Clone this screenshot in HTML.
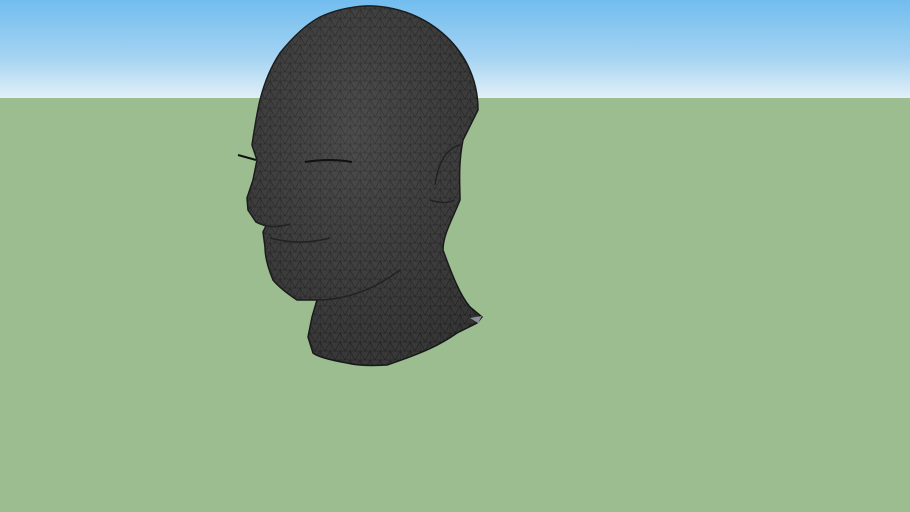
<!DOCTYPE html>
<html><head><meta charset="utf-8"><style>
html,body{margin:0;padding:0;width:910px;height:512px;overflow:hidden;background:#9bbd8f}
</style></head><body>
<svg width="910" height="512" viewBox="0 0 910 512" xmlns="http://www.w3.org/2000/svg">
<defs>
<linearGradient id="sky" x1="0" y1="0" x2="0" y2="1">
<stop offset="0" stop-color="#72bdef"/>
<stop offset="0.6" stop-color="#a6d4f2"/>
<stop offset="1" stop-color="#e2f0f8"/>
</linearGradient>
<pattern id="mesh" width="10" height="9" patternUnits="userSpaceOnUse">
<rect width="10" height="9" fill="#444444"/>
<path d="M0 0L10 0M0 9L10 9M0 0L5 9L10 0M0 9L0 0" stroke="#252525" stroke-width="0.6" fill="none"/>
</pattern>
<radialGradient id="shade" cx="0.45" cy="0.35" r="0.7">
<stop offset="0" stop-color="#666" stop-opacity="0.25"/>
<stop offset="1" stop-color="#000" stop-opacity="0.2"/>
</radialGradient>
</defs>
<rect x="0" y="0" width="910" height="98" fill="url(#sky)"/>
<rect x="0" y="98" width="910" height="414" fill="#9bbd8f"/>
<path d="M365 6 C420 4 478 45 478 110 L463 140 C458 165 460 185 460 200 C452 220 443 235 443 250 C452 275 460 295 470 307 L482 317 L477 323 L457 333 C440 345 423 353 387 365 C370 366 355 365 347 363 C330 360 318 357 313 353 L308 337 L312 317 L317 300 L297 300 C285 292 278 286 273 280 C268 268 265 258 265 247 L263 232 L266 226 L256 222 L248 210 L247 198 L253 180 L257 160 L252 145 C255 125 257 112 260 100 C265 80 272 65 280 53 C292 38 305 25 320 17 C335 10 350 7 365 6Z" fill="url(#mesh)" stroke="#1a1a1a" stroke-width="1.5"/>
<path d="M365 6 C420 4 478 45 478 110 L463 140 C458 165 460 185 460 200 C452 220 443 235 443 250 C452 275 460 295 470 307 L482 317 L477 323 L457 333 C440 345 423 353 387 365 C370 366 355 365 347 363 C330 360 318 357 313 353 L308 337 L312 317 L317 300 L297 300 C285 292 278 286 273 280 C268 268 265 258 265 247 L263 232 L266 226 L256 222 L248 210 L247 198 L253 180 L257 160 L252 145 C255 125 257 112 260 100 C265 80 272 65 280 53 C292 38 305 25 320 17 C335 10 350 7 365 6Z" fill="url(#shade)"/>
<path d="M238 155 L256 160 M305 162 Q330 158 352 162" stroke="#111" stroke-width="2" fill="none"/>
<path d="M256 222 Q270 230 290 224 M270 238 Q300 246 330 238 M317 300 Q360 300 400 270" stroke="#222" stroke-width="1.5" fill="none"/>
<path d="M435 185 Q440 150 460 145 M430 200 Q445 205 455 200" stroke="#222" stroke-width="1.5" fill="none"/>
<path d="M470 318 L482 316 L478 323 Z" fill="#8a8f99"/>
</svg>
</body></html>
